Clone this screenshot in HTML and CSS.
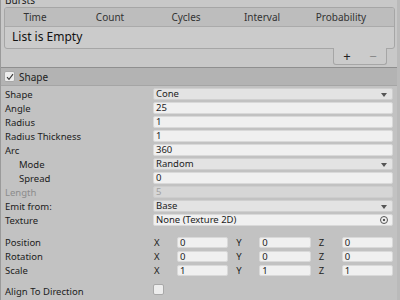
FILE: index.html
```html
<!DOCTYPE html>
<html lang="en">
<head>
    <meta charset="UTF-8">
    <title>Shape Module</title>
    <link rel="stylesheet" href="styles.css">
</head>
<body>
    <div class="inspector">
        <section class="bursts">
            <div class="bursts-label">Bursts</div>
            <div class="list">
                <div class="list-head">
                    <span>Time</span>
                    <span>Count</span>
                    <span>Cycles</span>
                    <span>Interval</span>
                    <span>Probability</span>
                </div>
                <div class="list-body">List is Empty</div>
            </div>
            <div class="list-footer">
                <span class="btn">+</span>
                <span class="btn dim">&minus;</span>
            </div>
        </section>

        <div class="module-header">
            <span class="check on">
                <svg width="8" height="8" viewBox="0 0 8 8"><path d="M1 4.2 L3 6.4 L7 1.2" fill="none" stroke="#3a3a3a" stroke-width="1.1"/></svg>
            </span>
            <span>Shape</span>
        </div>

        <div class="rows">
            <div class="row"><label>Shape</label><div class="field popup">Cone<span class="arrow"></span></div></div>
            <div class="row"><label>Angle</label><div class="field">25</div></div>
            <div class="row"><label>Radius</label><div class="field">1</div></div>
            <div class="row"><label>Radius Thickness</label><div class="field">1</div></div>
            <div class="row"><label>Arc</label><div class="field">360</div></div>
            <div class="row"><label class="indent">Mode</label><div class="field popup">Random<span class="arrow"></span></div></div>
            <div class="row"><label class="indent">Spread</label><div class="field">0</div></div>
            <div class="row disabled"><label>Length</label><div class="field">5</div></div>
            <div class="row"><label>Emit from:</label><div class="field popup">Base<span class="arrow"></span></div></div>
            <div class="row"><label>Texture</label><div class="field object">None (Texture 2D)<span class="picker"></span></div></div>
        </div>

        <div class="rows spaced">
            <div class="row">
                <label>Position</label>
                <div class="vector">
                    <div class="axis"><span>X</span><div class="field">0</div></div>
                    <div class="axis"><span>Y</span><div class="field">0</div></div>
                    <div class="axis"><span>Z</span><div class="field">0</div></div>
                </div>
            </div>
            <div class="row">
                <label>Rotation</label>
                <div class="vector">
                    <div class="axis"><span>X</span><div class="field">0</div></div>
                    <div class="axis"><span>Y</span><div class="field">0</div></div>
                    <div class="axis"><span>Z</span><div class="field">0</div></div>
                </div>
            </div>
            <div class="row">
                <label>Scale</label>
                <div class="vector">
                    <div class="axis"><span>X</span><div class="field">1</div></div>
                    <div class="axis"><span>Y</span><div class="field">1</div></div>
                    <div class="axis"><span>Z</span><div class="field">1</div></div>
                </div>
            </div>
        </div>

        <div class="rows spaced last">
            <div class="row"><label>Align To Direction</label><div><span class="check"></span></div></div>
        </div>
    </div>
</body>
</html>
```

FILE: styles.css
```css
body {
    margin: 0;
    background-color: #c2c2c2;
    font-family: "Noto Sans", "DejaVu Sans", sans-serif;
    font-size: 9.5px;
    color: #1c1c1c;
    overflow: hidden;
}

.inspector {
    width: 400px;
    height: 300px;
    box-sizing: border-box;
    border-left: 1px solid #9a9a9a;
    border-right: 3px solid #bababa;
}

/* Bursts list (top, cut off by the window) */
.bursts {
    height: 67px;
    background-color: #c8c8c8;
    border-bottom: 1px solid #8f8f8f;
}

.bursts-label {
    height: 7px;
    line-height: 0;
    padding-left: 4px;
    font-size: 10px;
}

.list {
    margin: 0 2px 0 3px;
    border: 1px solid #a6a6a6;
    border-radius: 3px;
    background-color: #cbcbcb;
    overflow: hidden;
}

.list-head {
    display: grid;
    grid-template-columns: 60px 90px 62px 90px 68px;
    height: 18px;
    align-items: center;
    text-align: center;
    background-color: #bdbdbd;
    border-bottom: 1px solid #aaaaaa;
    color: #333333;
    font-size: 10px;
}

.list-body {
    height: 21px;
    line-height: 20px;
    padding-left: 7px;
    font-size: 12px;
    color: #111111;
}

.list-footer {
    display: flex;
    justify-content: space-around;
    align-items: center;
    width: 52px;
    height: 16px;
    margin-left: 332px;
    margin-top: -1px;
    background-color: #cbcbcb;
    border: 1px solid #a6a6a6;
    border-top: none;
    border-radius: 0 0 3px 3px;
}

.btn {
    font-size: 13px;
    line-height: 14px;
    color: #222222;
}

.btn.dim {
    color: #8a8a8a;
}

/* Module header */
.module-header {
    display: flex;
    align-items: center;
    gap: 4px;
    height: 17px;
    padding-left: 3px;
    background-color: #b3b3b3;
    border-bottom: 1px solid #a5a5a5;
    font-size: 10px;
}

.check {
    display: inline-flex;
    align-items: center;
    justify-content: center;
    width: 9px;
    height: 9px;
    background-color: #ededed;
    border: 1px solid #a8a8a8;
    border-radius: 2px;
}

/* Property rows */
.rows {
    padding-top: 1px;
}

.rows.spaced {
    padding-top: 8px;
}

.rows.spaced.last {
    padding-top: 7px;
}

.row {
    display: grid;
    grid-template-columns: 152px 1fr;
    height: 14px;
    align-items: center;
    padding-right: 4px;
}

.row label {
    padding-left: 4px;
    white-space: nowrap;
}

.row label.indent {
    padding-left: 18px;
}

.field {
    position: relative;
    height: 12px;
    line-height: 10px;
    padding-left: 2px;
    background-color: #f0f0f0;
    border: 1px solid #d9d9d9;
    border-radius: 2px;
    box-sizing: border-box;
    white-space: nowrap;
}

.field.popup {
    background-color: #e3e3e3;
    border-color: #cfcfcf;
}

.arrow {
    position: absolute;
    right: 5px;
    top: 3.5px;
    border-left: 3.5px solid transparent;
    border-right: 3.5px solid transparent;
    border-top: 4px solid #555555;
}

.picker {
    position: absolute;
    right: 4px;
    top: 1px;
    width: 6px;
    height: 6px;
    border: 1px solid #555555;
    border-radius: 50%;
    background: radial-gradient(circle, #555555 1.2px, transparent 1.6px);
}

.disabled {
    color: #8c8c8c;
}

.disabled .field {
    background-color: #d6d6d6;
    border-color: #cdcdcd;
    color: #a0a0a0;
}

.vector {
    display: grid;
    grid-template-columns: repeat(3, 1fr);
    gap: 7px;
}

.axis {
    display: flex;
    align-items: center;
}

.axis span {
    width: 23px;
    flex-shrink: 0;
    padding-left: 1px;
}

.axis .field {
    flex: 1;
    height: 11px;
    line-height: 9px;
}
```
